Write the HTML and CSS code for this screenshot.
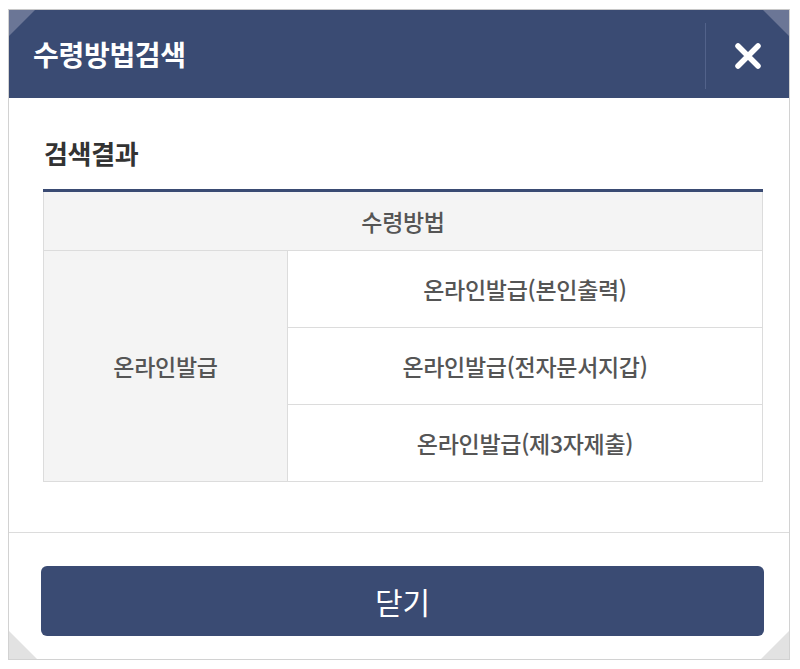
FILE: index.html
```html
<!DOCTYPE html>
<html lang="ko">
<head>
  <meta charset="UTF-8" />
  <meta name="viewport" content="width=device-width, initial-scale=1.0" />
  <title>수령방법검색</title>
  <link rel="stylesheet" href="styles.css">
</head>
<body>

  <div class="popup">
    <span class="corner tl"></span>
    <span class="corner tr"></span>
    <span class="corner bl"></span>
    <span class="corner br"></span>

    <div class="popup-head">
      <h1>수령방법검색</h1>
      <button class="btn-close" type="button" aria-label="닫기">
        <svg width="28" height="28" viewBox="0 0 28 28">
          <path d="M4 4 L24 24 M24 4 L4 24" stroke="#fff" stroke-width="5.5" stroke-linecap="round" fill="none"/>
        </svg>
      </button>
    </div>

    <div class="popup-body">
      <h2>검색결과</h2>
      <table class="result">
        <thead>
          <tr><th colspan="2">수령방법</th></tr>
        </thead>
        <tbody>
          <tr>
            <th rowspan="3">온라인발급</th>
            <td>온라인발급(본인출력)</td>
          </tr>
          <tr><td>온라인발급(전자문서지갑)</td></tr>
          <tr><td>온라인발급(제3자제출)</td></tr>
        </tbody>
      </table>
    </div>

    <div class="popup-foot">
      <button class="btn-ok" type="button">닫기</button>
    </div>
  </div>

</body>
</html>
```

FILE: styles.css
```css
body {
  margin: 0;
  background: #fff;
  font-family: "Noto Sans CJK KR", "Noto Sans", sans-serif;
}

.popup {
  position: relative;
  margin: 9px 0 0 8px;
  width: 782px;
  height: 651px;
  border: 1px solid #d2d2d2;
  border-top-color: #c8c8c8;
  box-sizing: border-box;
  display: flex;
  flex-direction: column;
  background: #fff;
}

/* corner folds */
.corner {
  position: absolute;
  width: 0;
  height: 0;
  z-index: 2;
}
.corner.tl {
  top: 0; left: 0;
  border-top: 26px solid #6b7696;
  border-right: 26px solid transparent;
}
.corner.tr {
  top: 0; right: 0;
  border-top: 26px solid #6b7696;
  border-left: 26px solid transparent;
}
.corner.bl {
  bottom: 0; left: 0;
  border-bottom: 28px solid #e2e2e2;
  border-right: 28px solid transparent;
}
.corner.br {
  bottom: 0; right: 0;
  border-bottom: 28px solid #e2e2e2;
  border-left: 28px solid transparent;
}

.popup-head {
  height: 88px;
  background: #3a4b73;
  display: flex;
  align-items: center;
  justify-content: space-between;
}

.popup-head h1 {
  margin: 0 0 0 24px;
  color: #fff;
  font-size: 28px;
  font-weight: 700;
  letter-spacing: -0.3px;
}

.btn-close {
  width: 84px;
  height: 66px;
  margin-top: 4px;
  border: 0;
  border-left: 1px solid #52628a;
  background: transparent;
  display: flex;
  align-items: center;
  justify-content: center;
  padding: 0;
  cursor: pointer;
}

.popup-body {
  height: 434px;
  padding: 0 28px 0 34px;
  border-bottom: 1px solid #dcdcdc;
}

.popup-body h2 {
  margin: 38px 0 0 1px;
  height: 53px;
  font-size: 26px;
  font-weight: 700;
  color: #333;
  letter-spacing: -0.3px;
  line-height: 34px;
}

.result {
  width: 720px;
  border-collapse: collapse;
  border-top: 3px solid #3a4b73;
  color: #555;
  font-size: 23px;
  font-weight: 500;
  letter-spacing: -0.3px;
}

.result th,
.result td {
  border: 1px solid #dcdcdc;
  text-align: center;
  font-weight: 500;
  padding: 0;
}

.result thead th {
  height: 58px;
  background: #f4f4f4;
  border-top: 0;
}

.result tbody th {
  width: 243px;
  background: #f4f4f4;
}

.result td {
  height: 76px;
  background: #fff;
}

.popup-foot {
  flex: 1;
  padding: 33px 26px 0 32px;
}

.btn-ok {
  width: 723px;
  height: 70px;
  border: 0;
  border-radius: 6px;
  background: #3a4b73;
  color: #fff;
  font-family: inherit;
  font-size: 30px;
  font-weight: 400;
  cursor: pointer;
}
```
